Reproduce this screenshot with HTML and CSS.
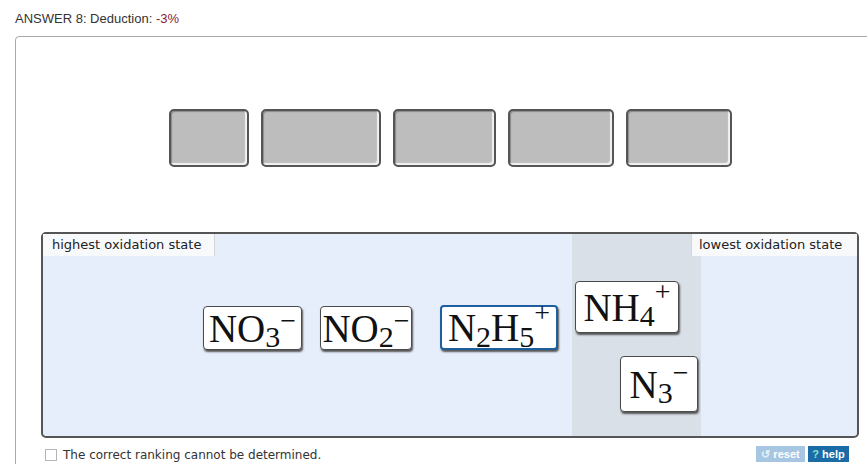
FILE: index.html
```html
<!DOCTYPE html>
<html>
<head lang="en">
    <meta charset="UTF-8">
    <title>Answer 8</title>
    <link rel="stylesheet" href="styles.css">
</head>
<body>
<div class="answer-head">ANSWER 8: Deduction: <span class="deduction">-3%</span></div>
<div class="answer-box">
    <div class="slots">
        <div class="slot slot-1"></div>
        <div class="slot slot-2"></div>
        <div class="slot slot-3"></div>
        <div class="slot slot-4"></div>
        <div class="slot slot-5"></div>
    </div>
    <div class="ranking">
        <div class="ranking-stripe"></div>
        <div class="ranking-labels">
            <div class="label label-high">highest oxidation state</div>
            <div class="label label-low">lowest oxidation state</div>
        </div>
        <!-- tiles sit where they were dropped -->
        <div class="tile tile-no3">NO<sub>3</sub><sup class="minus">&minus;</sup></div>
        <div class="tile tile-no2">NO<sub>2</sub><sup class="minus">&minus;</sup></div>
        <div class="tile tile-n2h5 selected">N<sub>2</sub>H<sub>5</sub><sup>+</sup></div>
        <div class="tile tile-nh4">NH<sub>4</sub><sup>+</sup></div>
        <div class="tile tile-n3">N<sub>3</sub><sup class="minus">&minus;</sup></div>
    </div>
    <div class="ranking-foot">
        <label class="cannot"><span class="check"></span>The correct ranking cannot be determined.</label>
        <div class="foot-buttons">
            <a href="javascript:void(0);" class="btn btn-reset"><span class="btn-icon">&#8634;</span> reset</a>
            <a href="javascript:void(0);" class="btn btn-help"><span class="btn-q">?</span> help</a>
        </div>
    </div>
</div>
</body>
</html>
```

FILE: styles.css
```css
* {
    box-sizing: border-box;
}

html, body {
    margin: 0px;
    padding: 0px;
    overflow: hidden;
    background: #ffffff;
}

a {
    text-decoration: none;
}

.answer-head {
    height: 36px;
    padding: 11px 0px 0px 15px;
    font-family: "Liberation Sans", Arial, sans-serif;
    font-size: 13px;
    line-height: 15px;
    color: #333333;
}

.deduction {
    color: #8b1c30;
}

.answer-box {
    margin-left: 15px;
    width: 870px;
    height: 520px;
    border: 1px solid #a9a9a9;
    border-radius: 4px;
    padding-top: 72px;
}

.slots {
    display: flex;
    justify-content: center;
    gap: 12px;
}

.slot {
    height: 58px;
    border: 2px solid #555555;
    border-radius: 5px;
    background: #bdbdbd;
    box-shadow: inset -2px -2px 1px #f2f2f2, inset 1px 1px 1px #8a8a8a;
}

.slot-1 { width: 80px; }
.slot-2 { width: 120px; }
.slot-3 { width: 103px; }
.slot-4 { width: 106px; }
.slot-5 { width: 106px; }

.ranking {
    position: relative;
    margin: 65px 0px 0px 25px;
    width: 818px;
    height: 206px;
    border: 2px solid #555555;
    border-radius: 5px;
    background: #e7eefb;
}

.ranking-stripe {
    position: absolute;
    left: 529px;
    top: 0px;
    bottom: 0px;
    width: 129px;
    background: #d9e0e8;
}

.ranking-labels {
    position: relative;
    display: flex;
    justify-content: space-between;
}

.label {
    height: 22px;
    line-height: 22px;
    background: #f8f9fb;
    font-family: "DejaVu Sans", Verdana, sans-serif;
    font-size: 13px;
    color: #222222;
}

.label-high {
    width: 172px;
    padding-left: 9px;
    border-right: 1px solid #d6d6d6;
}

.label-low {
    width: 166px;
    padding-left: 7px;
    border-left: 1px solid #d6d6d6;
}

.tile {
    position: absolute;
    display: flex;
    align-items: center;
    justify-content: center;
    background: #ffffff;
    border: 1px solid #4a4a4a;
    border-radius: 4px;
    box-shadow: 1px 2px 2px #555555;
    font-family: "Liberation Serif", "Times New Roman", serif;
    font-size: 39px;
    line-height: 1;
    color: #111111;
    white-space: nowrap;
}

.tile sub {
    font-size: 30px;
    position: relative;
    top: 9px;
    vertical-align: baseline;
}

.tile sup {
    font-size: 28px;
    position: relative;
    top: -15px;
    vertical-align: baseline;
}

.tile sup.minus {
    top: -7px;
}

.tile-n3 sup.minus {
    top: -11px;
}

.tile.selected {
    border: 2px solid #1d5f9e;
}

.tile-no3 { left: 160px; top: 72px; width: 99px; height: 44px; }
.tile-no2 { left: 277px; top: 72px; width: 92px; height: 44px; }
.tile-n2h5 { left: 397px; top: 71px; width: 118px; height: 45px; }
.tile-nh4 { left: 532px; top: 47px; width: 104px; height: 52px; }
.tile-n3 { left: 577px; top: 122px; width: 78px; height: 56px; }

.ranking-foot {
    display: flex;
    justify-content: space-between;
    align-items: center;
    width: 818px;
    margin: 8px 0px 0px 25px;
    padding: 0px 10px 0px 4px;
}

.cannot {
    display: flex;
    align-items: center;
    font-family: "DejaVu Sans", Verdana, sans-serif;
    font-size: 12px;
    color: #333333;
    padding-top: 2px;
}

.check {
    width: 12px;
    height: 12px;
    border: 1px solid #b5b5b5;
    background: #ffffff;
    margin-right: 6px;
}

.foot-buttons {
    display: flex;
    gap: 3px;
}

.btn {
    display: block;
    height: 16px;
    line-height: 16px;
    padding: 0px 4px;
    font-family: "Liberation Sans", Arial, sans-serif;
    font-size: 11px;
    font-weight: bold;
    color: #ffffff;
    text-align: center;
}

.btn-reset {
    width: 49px;
    background: #a6c6e2;
}

.btn-help {
    width: 41px;
    background: #1b6ca6;
}

.btn-icon {
    color: #e6f0f8;
}

.btn-q {
    color: #86e3cf;
}
```
